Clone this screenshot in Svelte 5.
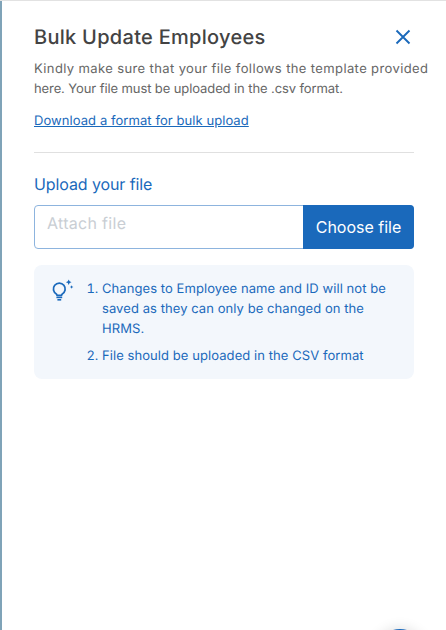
<script>
    const notes = [
        "Changes to Employee name and ID will not be saved as they can only be changed on the HRMS.",
        "File should be uploaded in the CSV format",
    ];
</script>

<div class="page">
    <aside class="drawer">
        <header class="head">
            <h1>Bulk Update Employees</h1>
            <button class="close" aria-label="Close">
                <svg width="16" height="16" viewBox="0 0 16 16">
                    <path d="M1.5 1.5l13 13M14.5 1.5l-13 13" fill="none" stroke="#1a69bb" stroke-width="1.9" />
                </svg>
            </button>
        </header>
        <p class="intro">
            <span>Kindly make sure that your file follows the template provided</span>
            <span class="second">here. Your file must be uploaded in the .csv format.</span>
        </p>
        <a class="download" href="#format">Download a format for bulk upload</a>
        <hr />
        <h2>Upload your file</h2>
        <div class="picker">
            <span class="placeholder">Attach file</span>
            <button class="choose">Choose file</button>
        </div>
        <div class="tips">
            <svg class="bulb" width="24" height="24" viewBox="0 0 24 24" fill="none">
                <path d="M5.6 15.2a5.9 5.9 0 1 1 5.4 0l-.4 1.1H6z" stroke="#1a69bb" stroke-width="1.8" stroke-linejoin="round" />
                <path d="M5.4 18.4h5.8" stroke="#1a69bb" stroke-width="1.6" />
                <path d="M6.4 20.8h3.8" stroke="#1a69bb" stroke-width="1.6" />
                <path d="M17.7.4l.9 1.9 1.9.9-1.9.9-.9 1.9-.9-1.9-1.9-.9 1.9-.9z" fill="#1a69bb" />
                <path d="M20.6 6.2l.6 1.2 1.2.6-1.2.6-.6 1.2-.6-1.2-1.2-.6 1.2-.6z" fill="#1a69bb" />
            </svg>
            <ol>
                {#each notes as note}
                    <li>{note}</li>
                {/each}
            </ol>
        </div>
    </aside>
    <div class="fab"></div>
</div>

<style>
    :global(body) {
        margin: 0;
        background: #fff;
    }

    .page {
        position: relative;
        width: 446px;
        height: 630px;
        overflow: hidden;
        box-sizing: border-box;
        border-top: 1px solid #e2e2e2;
        font-family: Inter, Roboto, "Noto Sans", sans-serif;
        text-rendering: geometricPrecision;
    }

    .drawer {
        box-sizing: border-box;
        height: 100%;
        border-left: 2px solid #7fa3b8;
        padding: 22px 32px 0;
        display: flex;
        flex-direction: column;
    }

    .head {
        display: flex;
        justify-content: space-between;
        align-items: center;
        height: 28px;
    }

    h1 {
        margin: 0;
        font-size: 20px;
        font-weight: 500;
        letter-spacing: 0.28px;
        color: #434343;
    }

    .close {
        background: none;
        border: none;
        padding: 0;
        margin-right: 3px;
        display: flex;
        cursor: pointer;
    }

    .intro {
        margin: 8px 0 0;
        font-size: 13px;
        line-height: 20px;
        white-space: nowrap;
        color: #666;
    }

    .intro span {
        display: block;
        letter-spacing: 0.38px;
    }

    .intro .second {
        letter-spacing: -0.1px;
    }

    .download {
        margin-top: 12px;
        font-size: 13px;
        line-height: 20px;
        letter-spacing: 0.07px;
        color: #1a69bb;
    }

    hr {
        width: 100%;
        margin: 21px 0 0;
        border: none;
        border-top: 1px solid #e0e0e0;
    }

    h2 {
        margin: 21px 0 0;
        font-size: 16px;
        line-height: 20px;
        font-weight: 400;
        letter-spacing: -0.1px;
        color: #1a69bb;
    }

    .picker {
        margin-top: 11px;
        height: 44px;
        display: flex;
        box-sizing: border-box;
        border: 1px solid #8db4de;
        border-radius: 4px;
    }

    .placeholder {
        flex: 1;
        padding: 7px 12px 0;
        font-size: 16px;
        line-height: 20px;
        letter-spacing: 0.3px;
        color: #c9ced4;
    }

    .choose {
        width: 111px;
        margin: -1px;
        border: none;
        border-radius: 0 4px 4px 0;
        background: #1a69bb;
        color: #fff;
        font: inherit;
        font-size: 16px;
    }

    .tips {
        margin-top: 16px;
        padding: 14px 16px 13px;
        display: flex;
        gap: 10px;
        background: #f3f7fc;
        border-radius: 8px;
    }

    .bulb {
        flex: none;
        margin-left: 1px;
    }

    ol {
        margin: 0;
        padding: 0 0 0 17px;
        font-size: 13px;
        line-height: 20px;
        letter-spacing: 0.07px;
        color: #1a69bb;
    }

    li + li {
        margin-top: 7px;
    }

    .fab {
        position: absolute;
        left: 375px;
        top: 628px;
        width: 50px;
        height: 50px;
        border-radius: 50%;
        background: #1a69bb;
        box-shadow: 0 0 14px rgba(0, 0, 0, 0.14);
    }
</style>
